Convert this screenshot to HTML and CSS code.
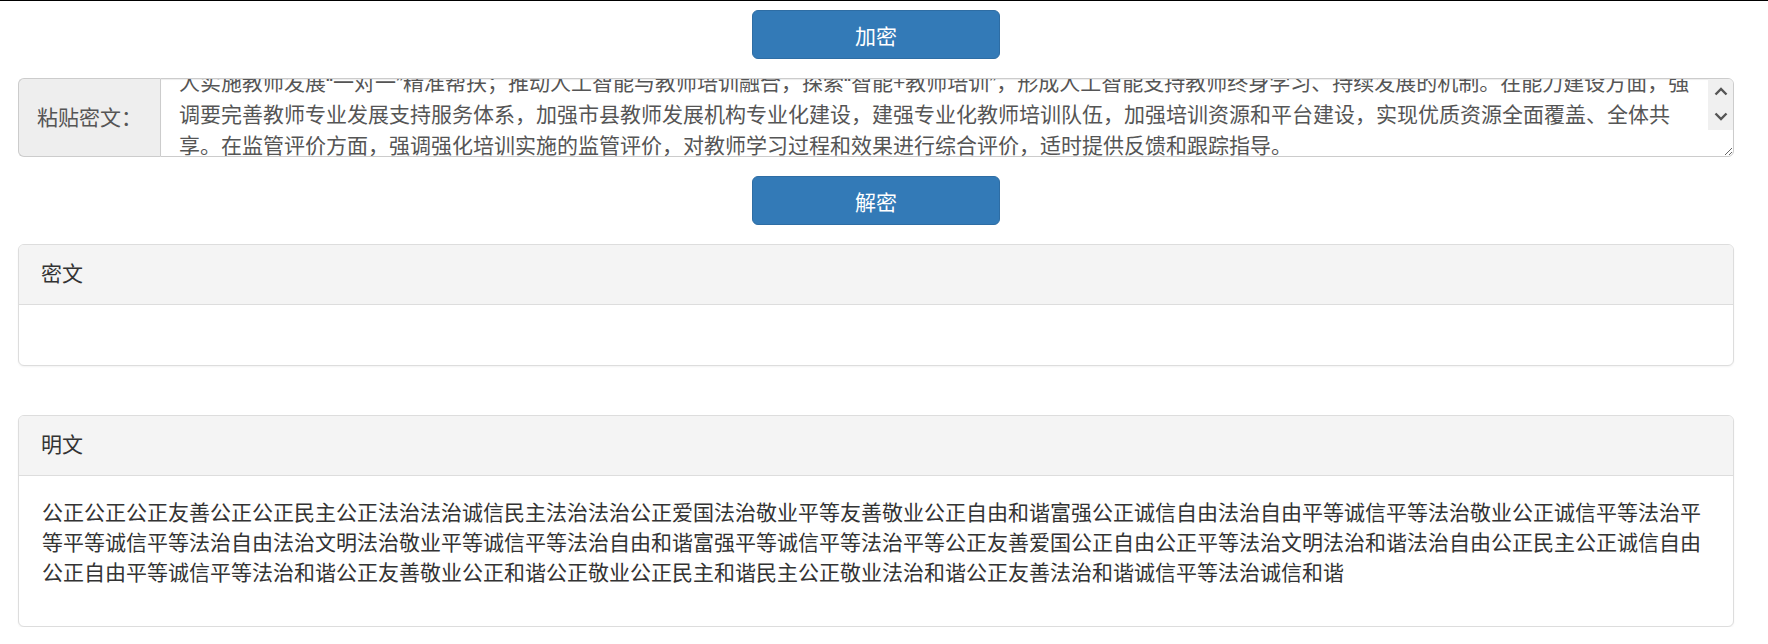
FILE: index.html
```html
<!DOCTYPE html>
<html lang="zh-CN">
<head>
    <meta charset="UTF-8">
    <meta name="viewport" content="width=device-width, initial-scale=1.0">
    <title>核心价值观加密</title>
    <link rel="stylesheet" href="styles.css">
</head>
<body>

    <div class="wrap">
        <div class="btn-row">
            <button class="btn" id="encryptBtn">加密</button>
        </div>

        <div class="input-group">
            <span class="addon">粘贴密文：</span>
            <div class="ta-box">
                <textarea id="cipherInput" class="cipher-input">人实施教师发展“一对一”精准帮扶；推动人工智能与教师培训融合，探索“智能+教师培训”，形成人工智能支持教师终身学习、持续发展的机制。在能力建设方面，强
调要完善教师专业发展支持服务体系，加强市县教师发展机构专业化建设，建强专业化教师培训队伍，加强培训资源和平台建设，实现优质资源全面覆盖、全体共
享。在监管评价方面，强调强化培训实施的监管评价，对教师学习过程和效果进行综合评价，适时提供反馈和跟踪指导。</textarea>
                <div class="scroll-rail">
                    <span class="scroll-arrow">
                        <svg width="14" height="9" viewBox="0 0 14 9"><path d="M1.5 7.5L7 2L12.5 7.5" fill="none" stroke="#555" stroke-width="2.4"/></svg>
                    </span>
                    <span class="scroll-arrow">
                        <svg width="14" height="9" viewBox="0 0 14 9"><path d="M1.5 1.5L7 7L12.5 1.5" fill="none" stroke="#555" stroke-width="2.4"/></svg>
                    </span>
                </div>
            </div>
        </div>

        <div class="btn-row">
            <button class="btn" id="decryptBtn">解密</button>
        </div>

        <div class="panel">
            <div class="panel-heading">密文</div>
            <div class="panel-body"><p id="cipherText"></p></div>
        </div>

        <div class="panel panel-plain">
            <div class="panel-heading">明文</div>
            <div class="panel-body"><p id="plainText">公正公正公正友善公正公正民主公正法治法治诚信民主法治法治公正爱国法治敬业平等友善敬业公正自由和谐富强公正诚信自由法治自由平等诚信平等法治敬业公正诚信平等法治平等平等诚信平等法治自由法治文明法治敬业平等诚信平等法治自由和谐富强平等诚信平等法治平等公正友善爱国公正自由公正平等法治文明法治和谐法治自由公正民主公正诚信自由公正自由平等诚信平等法治和谐公正友善敬业公正和谐公正敬业公正民主和谐民主公正敬业法治和谐公正友善法治和谐诚信平等法治诚信和谐</p></div>
        </div>
    </div>

    <script>
        // 保持和截图一样的滚动位置
        document.getElementById("cipherInput").scrollTop = 21;
    </script>

</body>
</html>
```

FILE: styles.css
```css
body {
    margin: 0;
    border-top: 1px solid #000;
    font-family: "Liberation Sans", "Noto Sans CJK SC", sans-serif;
    font-size: 21px;
    line-height: 30px;
    color: #333;
    background: #fff;
}

.wrap {
    padding: 9px 34px 0 18px;
}

.btn-row {
    display: flex;
    justify-content: center;
}

.input-group,
.input-group + .btn-row {
    margin-top: 19px;
}

.btn {
    width: 248px;
    height: 49px;
    padding: 0;
    font-family: inherit;
    font-size: 21px;
    color: #fff;
    background-color: #337ab7;
    border: 1px solid #2e6da4;
    border-radius: 6px;
    cursor: pointer;
}

.input-group {
    display: flex;
    height: 79px;
}

.addon {
    display: flex;
    align-items: center;
    padding: 0 18px;
    color: #555;
    background-color: #eee;
    border: 1px solid #ccc;
    border-right: 0;
    border-radius: 6px 0 0 6px;
    white-space: nowrap;
}

.ta-box {
    position: relative;
    flex: 1;
    display: flex;
}

.cipher-input {
    flex: 1;
    box-sizing: border-box;
    height: 79px;
    margin: 0;
    padding: 9px 37px 9px 18px;
    font-family: inherit;
    font-size: 21px;
    line-height: 31.5px;
    color: #555;
    border: 1px solid #ccc;
    border-radius: 0 6px 6px 0;
    box-shadow: inset 0 1px 1px rgba(0, 0, 0, .075);
    outline: none;
    scrollbar-width: none;
}

/* 滚动条（截图里是 Windows 样式） */
.scroll-rail {
    position: absolute;
    top: 1px;
    right: 1px;
    width: 25px;
    height: 51px;
    background: #f0f0f0;
    border-top-right-radius: 5px;
}

.scroll-arrow {
    display: flex;
    align-items: center;
    justify-content: center;
    height: 25px;
}

.panel {
    margin-top: 19px;
    background: #fff;
    border: 1px solid #ddd;
    border-radius: 6px;
    box-shadow: 0 1px 2px rgba(0, 0, 0, .05);
}

.panel-plain {
    margin-top: 49px;
}

.panel-heading {
    padding: 14px 22px 15px;
    background-color: #f4f4f4;
    border-bottom: 1px solid #ddd;
    border-radius: 5px 5px 0 0;
}

.panel-body {
    padding: 22px 22px 23px 23px;
}

.panel-body p {
    margin: 0 0 15px;
}
```
